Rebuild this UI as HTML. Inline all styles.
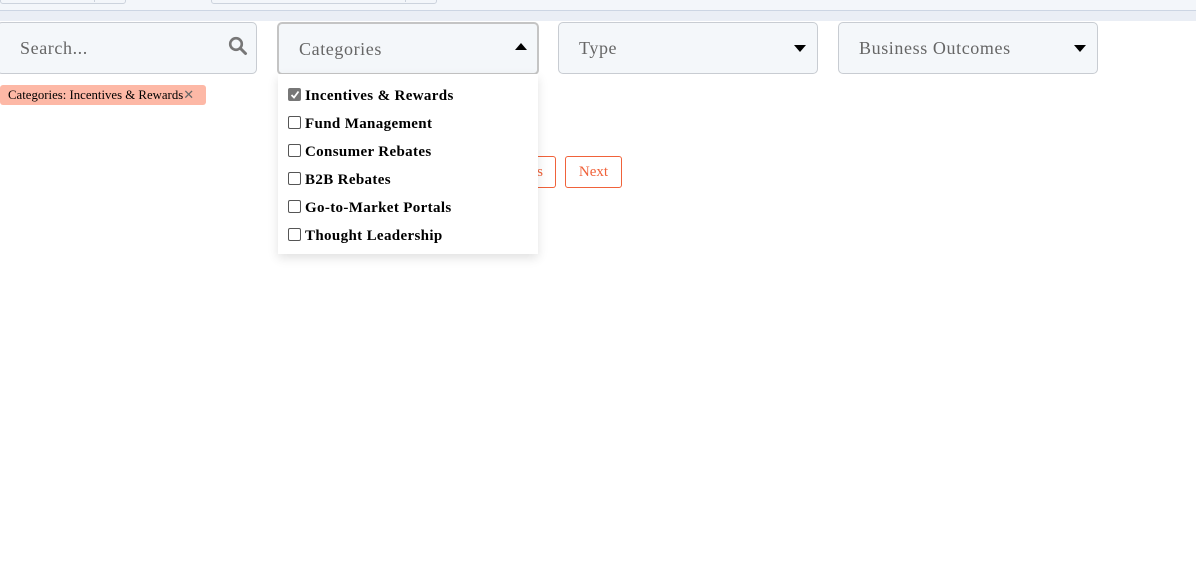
<!DOCTYPE html>
<html><head><style>
body{margin:0;width:1196px;height:574px;background:#fff;font-family:"Liberation Serif",serif;position:relative;overflow:hidden}
.a{position:absolute}
.box{position:absolute;top:22px;height:52px;background:#f4f7fa;border:1px solid #c8ccd2;border-radius:5px;box-sizing:border-box;width:260px}
.box span{position:absolute;left:20px;top:15px;font-size:18px;color:#666;letter-spacing:.6px}
.tri{position:absolute;right:11px;top:22px;width:0;height:0;border-left:6px solid transparent;border-right:6px solid transparent;border-top:7px solid #000}
.dd{position:absolute;left:278px;top:74px;width:260px;height:180px;background:#fff;box-shadow:0 4px 10px rgba(0,0,0,.12)}
.it{position:absolute;left:10px;font-size:15px;letter-spacing:.35px;font-weight:bold;color:#000;white-space:nowrap}
.cb{display:inline-block;width:13px;height:13px;border:1px solid #555;border-radius:2px;box-sizing:border-box;margin-right:4px;vertical-align:-1px;background:#fff;position:relative}
.cb.on{background:#777;border-color:#777}
.btn{position:absolute;top:156px;height:32px;border:1px solid #f0623a;border-radius:3px;box-sizing:border-box;color:#f0623a;font-size:15px;line-height:30px;text-align:center;background:#fff}
</style></head><body>
<div class="a" style="left:0;top:0;width:1196px;height:10px;background:#f3f6fa"></div>
<div class="a" style="left:0;top:-5px;width:124px;height:7px;border:1px solid #ccd3dd;border-radius:3px;background:#f3f6fa"></div>
<div class="a" style="left:94px;top:0;width:1px;height:2px;background:#ccd3dd"></div>
<div class="a" style="left:211px;top:-5px;width:224px;height:7px;border:1px solid #ccd3dd;border-radius:3px;background:#f3f6fa"></div>
<div class="a" style="left:405px;top:0;width:1px;height:2px;background:#ccd3dd"></div>
<div class="a" style="left:0;top:10px;width:1196px;height:1px;background:#ccd5e3"></div>
<div class="a" style="left:0;top:11px;width:1196px;height:10px;background:#eaeef5"></div>

<div class="box" style="left:-3px;width:260px"><span style="left:22px">Search...</span>
<svg class="a" style="right:8px;top:13px" width="20" height="20" viewBox="0 0 20 20"><circle cx="8" cy="8" r="5.8" fill="none" stroke="#777" stroke-width="2.6"/><line x1="12.5" y1="12.5" x2="17.5" y2="17.5" stroke="#777" stroke-width="3" stroke-linecap="round"/></svg></div>
<div class="box" style="left:277px;width:262px;height:53px;border:2px solid #c4c4c4"><span style="left:20px">Categories</span><div class="tri" style="border-top:0;border-bottom:7px solid #000;top:19px;right:10px"></div></div>
<div class="box" style="left:558px"><span>Type</span><div class="tri"></div></div>
<div class="box" style="left:838px"><span>Business Outcomes</span><div class="tri"></div></div>

<div class="a" style="left:0;top:85px;width:206px;height:20px;background:#fdb8a6;border-radius:3px;font-size:12.8px;line-height:20px;padding-left:8px;box-sizing:border-box;white-space:nowrap">Categories: Incentives &amp; Rewards<span style="color:#666">✕</span></div>

<div class="btn" style="left:500px;width:56px;border-left:none;text-align:right;padding-right:12px">s</div>
<div class="btn" style="left:565px;width:57px">Next</div>

<div class="dd">
<div class="it" style="top:14px"><span class="cb on"><svg style="position:absolute;left:1px;top:1px" width="10" height="10" viewBox="0 0 10 10"><path d="M1.5 5l2.5 2.5 4.5-6" stroke="#fff" stroke-width="1.8" fill="none"/></svg></span>Incentives &amp; Rewards</div>
<div class="it" style="top:42px"><span class="cb"></span>Fund Management</div>
<div class="it" style="top:70px"><span class="cb"></span>Consumer Rebates</div>
<div class="it" style="top:98px"><span class="cb"></span>B2B Rebates</div>
<div class="it" style="top:126px"><span class="cb"></span>Go-to-Market Portals</div>
<div class="it" style="top:154px"><span class="cb"></span>Thought Leadership</div>
</div>
</body></html>
